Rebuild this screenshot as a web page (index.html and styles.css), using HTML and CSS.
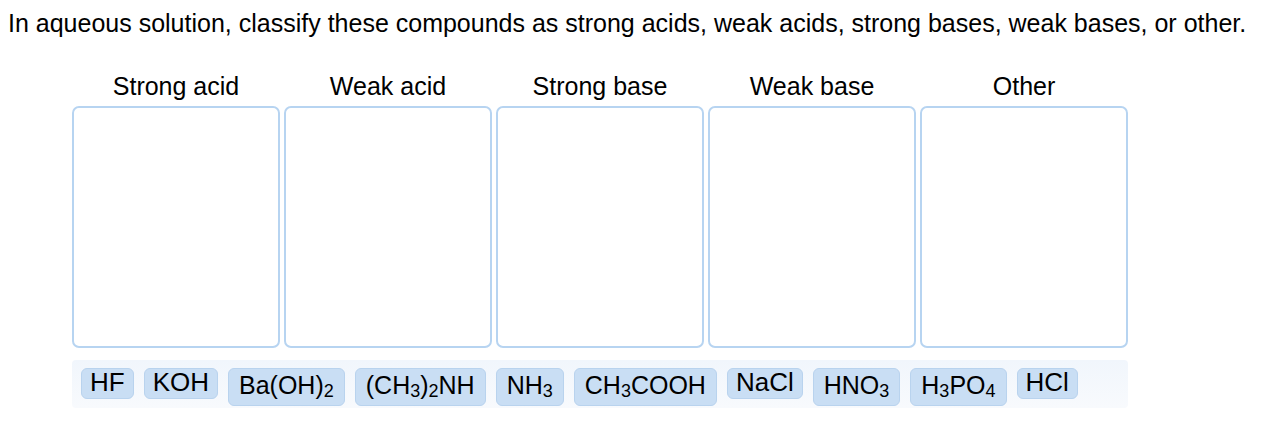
FILE: index.html
```html
<!DOCTYPE html>
<html lang="en">
<head>
<meta charset="utf-8">
<title>Classify compounds</title>
<link rel="stylesheet" href="styles.css">
</head>
<body>
<p class="prompt">In aqueous solution, classify these compounds as strong acids, weak acids, strong bases, weak bases, or other.</p>
<div class="board">
  <div class="bins">
    <div class="bin"><h3 class="bin-title">Strong acid</h3><div class="bin-drop"></div></div>
    <div class="bin"><h3 class="bin-title">Weak acid</h3><div class="bin-drop"></div></div>
    <div class="bin"><h3 class="bin-title">Strong base</h3><div class="bin-drop"></div></div>
    <div class="bin"><h3 class="bin-title">Weak base</h3><div class="bin-drop"></div></div>
    <div class="bin"><h3 class="bin-title">Other</h3><div class="bin-drop"></div></div>
  </div>
  <div class="tray">
    <span class="chip">HF</span>
    <span class="chip">KOH</span>
    <span class="chip chip--formula">Ba(OH)<sub>2</sub></span>
    <span class="chip chip--formula">(CH<sub>3</sub>)<sub>2</sub>NH</span>
    <span class="chip chip--formula">NH<sub>3</sub></span>
    <span class="chip chip--formula">CH<sub>3</sub>COOH</span>
    <span class="chip">NaCl</span>
    <span class="chip chip--formula">HNO<sub>3</sub></span>
    <span class="chip chip--formula">H<sub>3</sub>PO<sub>4</sub></span>
    <span class="chip">HCl</span>
  </div>
</div>
</body>
</html>
```

FILE: styles.css
```css
html, body {
  margin: 0;
  padding: 0;
  background: #ffffff;
}

body {
  font-family: "Liberation Sans", Arial, sans-serif;
  color: #000000;
}

.prompt {
  margin: 9px 0 0 8px;
  font-size: 25px;
  line-height: 28px;
  white-space: nowrap;
}

.board {
  width: 1056px;
  margin: 35px 0 0 72px;
}

.bins {
  display: grid;
  grid-template-columns: repeat(5, 208px);
  column-gap: 4px;
}

.bin {
  display: flex;
  flex-direction: column;
}

.bin-title {
  margin: 0 0 6px;
  font-size: 25px;
  font-weight: normal;
  line-height: 28px;
  text-align: center;
}

.bin-drop {
  box-sizing: border-box;
  height: 242px;
  border: 2px solid #b7d4f1;
  border-radius: 7px;
  background: #ffffff;
}

.tray {
  display: flex;
  align-items: flex-start;
  gap: 10px;
  margin-top: 12px;
  padding: 8px 9px 2px;
  border-radius: 4px;
  background: linear-gradient(to bottom, #f1f6fc, #f8fafd);
}

.chip {
  display: inline-block;
  padding: 0 8px 3px;
  border: 1px solid #b9d3ee;
  border-radius: 6px;
  background: #c9def4;
  font-size: 26px;
  line-height: 26px;
  white-space: nowrap;
}

.chip--formula {
  padding: 4px 10px 7px;
  font-size: 25px;
  line-height: 25px;
}

.chip sub {
  font-size: 18px;
  line-height: 0;
  vertical-align: -3px;
}
```
